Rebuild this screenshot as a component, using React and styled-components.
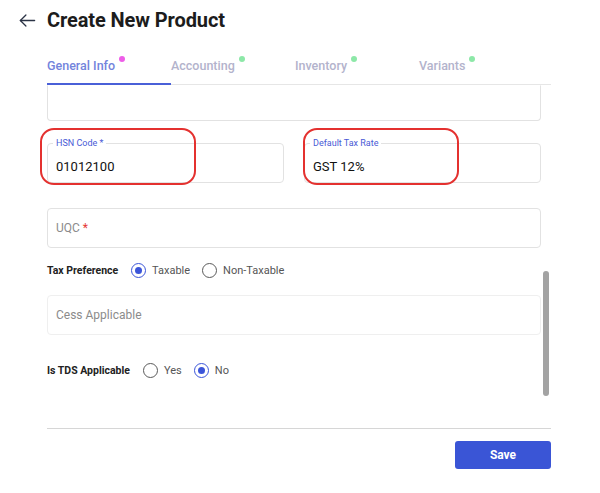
import styled, { createGlobalStyle } from "styled-components";

const GlobalStyle = createGlobalStyle`
  body {
    margin: 0;
    background: #ffffff;
    font-family: Roboto, "Liberation Sans", sans-serif;
  }
`;

const Page = styled.div`
  width: 600px;
  height: 493px;
  overflow: hidden;
`;

const Header = styled.div`
  display: flex;
  align-items: center;
  height: 40px;
  padding-left: 17px;
  gap: 10px;
`;

const BackButton = styled.button`
  display: flex;
  align-items: center;
  justify-content: center;
  width: 20px;
  height: 20px;
  padding: 0;
  border: none;
  background: none;
  cursor: pointer;
`;

const Title = styled.h1`
  margin: 0;
  font-size: 20px;
  font-weight: 700;
  color: #1c1c1c;
  letter-spacing: -0.1px;
`;

const Content = styled.div`
  margin-left: 47px;
  width: 504px;
`;

const TabBar = styled.div`
  display: flex;
  margin-top: 11px;
  border-bottom: 1px solid #e6e6e6;
`;

const Tab = styled.div`
  position: relative;
  display: flex;
  width: 124px;
  padding: 7px 0 10px;
  font-size: 12.5px;
  line-height: 16px;
  font-weight: 500;
  color: ${(p) => (p.$active ? "#7384dc" : "#b3b3cc")};

  &::after {
    content: "";
    position: absolute;
    left: 0;
    right: 0;
    bottom: -1px;
    height: 2px;
    background: ${(p) => (p.$active ? "#4a60d8" : "transparent")};
  }
`;

const Dot = styled.span`
  width: 6px;
  height: 6px;
  margin-left: 4px;
  margin-top: -2px;
  border-radius: 50%;
  background: ${(p) => p.$color};
`;

const ScrollArea = styled.div`
  display: flex;
  height: 330px;
`;

const Form = styled.div`
  display: flex;
  flex-direction: column;
  width: 494px;
`;

const Track = styled.div`
  width: 10px;
`;

const Thumb = styled.div`
  width: 6px;
  height: 125px;
  margin: 186px 0 0 2px;
  border-radius: 3px;
  background: #a3a3a3;
`;

const Field = styled.div`
  position: relative;
  box-sizing: border-box;
  flex: ${(p) => (p.$half ? "1" : "none")};
  height: ${(p) => (p.$cut ? 36 : 40)}px;
  margin-top: ${(p) => p.$top || 0}px;
  padding: 0 8px;
  display: flex;
  align-items: center;
  border: 1px solid ${(p) => (p.$faint ? "#efefef" : "#e2e2e2")};
  border-top-color: ${(p) => (p.$cut ? "transparent" : p.$faint ? "#efefef" : "#e2e2e2")};
  border-radius: ${(p) => (p.$cut ? "0 0 4px 4px" : "4px")};
`;

const Row = styled.div`
  display: flex;
  gap: 20px;
  margin-top: ${(p) => p.$top || 0}px;
`;

const FloatLabel = styled.span`
  position: absolute;
  top: -6px;
  left: 5px;
  padding: 0 3px;
  background: #ffffff;
  font-size: 9px;
  line-height: 11px;
  color: #4a5ad6;
`;

const Value = styled.span`
  padding-top: 6px;
  font-size: 13px;
  font-weight: 400;
  color: #111111;
`;

const Placeholder = styled.span`
  font-size: 12px;
  color: #8b8b8b;
`;

const Star = styled.span`
  color: #e53935;
  margin-left: 3px;
`;

const Highlight = styled.div`
  position: absolute;
  top: -16px;
  left: ${(p) => p.$left}px;
  width: 156px;
  height: 57px;
  box-sizing: border-box;
  border: 2.5px solid #e4312f;
  border-radius: 14px;
  pointer-events: none;
`;

const OptionRow = styled.div`
  display: flex;
  align-items: center;
  height: 20px;
  margin-top: ${(p) => p.$top}px;
`;

const OptionLabel = styled.span`
  font-size: 10.5px;
  font-weight: 700;
  color: #222222;
  width: ${(p) => p.$width}px;
`;

const Radio = styled.label`
  display: flex;
  align-items: center;
  gap: 6px;
  margin-right: 12px;
  font-size: 11px;
  color: #555555;
`;

const Circle = styled.span`
  box-sizing: border-box;
  width: 15px;
  height: 15px;
  border-radius: 50%;
  border: 1.5px solid ${(p) => (p.$checked ? "#3b55d9" : "#5a5a5a")};
  display: flex;
  align-items: center;
  justify-content: center;

  &::after {
    content: "";
    width: 7px;
    height: 7px;
    border-radius: 50%;
    background: ${(p) => (p.$checked ? "#3b55d9" : "transparent")};
  }
`;

const Footer = styled.div`
  display: flex;
  justify-content: flex-end;
  margin-top: 13px;
  padding-top: 12px;
  border-top: 1px solid #d6d6d6;
`;

const SaveButton = styled.button`
  width: 96px;
  height: 28px;
  border: none;
  border-radius: 3px;
  background: #3a55d6;
  color: #ffffff;
  font-family: inherit;
  font-size: 12px;
  font-weight: 700;
  cursor: pointer;
`;

function RadioOption({ label, checked }) {
  return (
    <Radio>
      <Circle $checked={checked} />
      {label}
    </Radio>
  );
}

const tabs = [
  { name: "General Info", dot: "#ee5ee8", active: true },
  { name: "Accounting", dot: "#8de8a8" },
  { name: "Inventory", dot: "#8de8a8" },
  { name: "Variants", dot: "#8de8a8" },
];

export default function App() {
  return (
    <Page>
      <GlobalStyle />
      <Header>
        <BackButton>
          <svg width="19" height="19" viewBox="0 0 24 24" fill="none" stroke="#2b3345" strokeWidth="1.6" strokeLinecap="round" strokeLinejoin="round">
            <path d="M21 12H3" />
            <path d="M10 5l-7 7 7 7" />
          </svg>
        </BackButton>
        <Title>Create New Product</Title>
      </Header>
      <Content>
        <TabBar>
          {tabs.map((t) => (
            <Tab key={t.name} $active={t.active}>
              {t.name}
              <Dot $color={t.dot} />
            </Tab>
          ))}
        </TabBar>
        <ScrollArea>
          <Form>
            <Field $cut />
            <Row $top={22}>
              <Field $half>
                <FloatLabel>HSN Code *</FloatLabel>
                <Value>01012100</Value>
                <Highlight $left={-8} />
              </Field>
              <Field $half>
                <FloatLabel>Default Tax Rate</FloatLabel>
                <Value>GST 12%</Value>
                <Highlight $left={-2} />
              </Field>
            </Row>
            <Field $top={25}>
              <Placeholder>
                UQC<Star>*</Star>
              </Placeholder>
            </Field>
            <OptionRow $top={12}>
              <OptionLabel $width={84}>Tax Preference</OptionLabel>
              <RadioOption label="Taxable" checked />
              <RadioOption label="Non-Taxable" />
            </OptionRow>
            <Field $top={15} $faint>
              <Placeholder>Cess Applicable</Placeholder>
            </Field>
            <OptionRow $top={25}>
              <OptionLabel $width={96}>Is TDS Applicable</OptionLabel>
              <RadioOption label="Yes" />
              <RadioOption label="No" checked />
            </OptionRow>
          </Form>
          <Track>
            <Thumb />
          </Track>
        </ScrollArea>
        <Footer>
          <SaveButton>Save</SaveButton>
        </Footer>
      </Content>
    </Page>
  );
}
